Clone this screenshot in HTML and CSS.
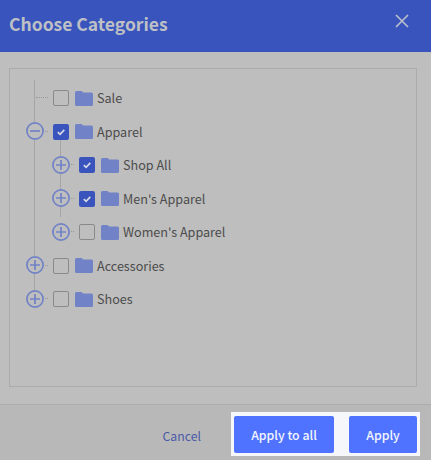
FILE: index.html
```html
<!DOCTYPE html>
<html lang="en">
<head>
<meta charset="utf-8">
<title>Choose Categories</title>
<link rel="stylesheet" href="styles.css">
<svg class="defs" width="0" height="0">
  <symbol id="folder" viewBox="0 0 18 15"><path d="M1.5 0H6.600L8.200 1.600H16.500A1.500 1.500 0 0 1 18 3.100V13.500A1.500 1.500 0 0 1 16.500 15H1.500A1.500 1.500 0 0 1 0 13.500V1.500A1.500 1.500 0 0 1 1.500 0Z" fill="#7182c6"/></symbol>
  <symbol id="plus" viewBox="0 0 18 18"><circle cx="9" cy="9" r="8.100" fill="#bebebe" stroke="#7182c6" stroke-width="1.700"/><path d="M4 9H14M9 4V14" stroke="#7182c6" stroke-width="1.700"/></symbol>
  <symbol id="minus" viewBox="0 0 18 18"><circle cx="9" cy="9" r="8.100" fill="#bebebe" stroke="#7182c6" stroke-width="1.700"/><path d="M4 9H14" stroke="#7182c6" stroke-width="1.700"/></symbol>
  <symbol id="tick" viewBox="0 0 16 16"><path d="M4.800 8.200L7.100 10.400L11.300 5.900" fill="none" stroke="#d6d9e6" stroke-width="1.700"/></symbol>
</svg>
</head>
<body>
<div class="dialog">
  <header class="head">
    <h1>Choose Categories</h1>
    <svg class="close" width="14" height="14" viewBox="0 0 14 14"><path d="M1 1L13 13M13 1L1 13" stroke="#bcc0cc" stroke-width="1.600" fill="none"/></svg>
  </header>
  <main class="body">
    <div class="panel">
      <ul class="tree">
        <li class="row leaf">
          <span class="tog"></span><span class="cb"></span><svg class="fo"><use href="#folder"/></svg><span class="lb">Sale</span>
        </li>
        <li class="row">
          <svg class="tog"><use href="#minus"/></svg><span class="cb on"><svg><use href="#tick"/></svg></span><svg class="fo"><use href="#folder"/></svg><span class="lb">Apparel</span>
        </li>
        <li>
          <ul class="sub">
            <li class="row"><svg class="tog"><use href="#plus"/></svg><span class="cb on"><svg><use href="#tick"/></svg></span><svg class="fo"><use href="#folder"/></svg><span class="lb">Shop All</span></li>
            <li class="row"><svg class="tog"><use href="#plus"/></svg><span class="cb on"><svg><use href="#tick"/></svg></span><svg class="fo"><use href="#folder"/></svg><span class="lb">Men's Apparel</span></li>
            <li class="row"><svg class="tog"><use href="#plus"/></svg><span class="cb"></span><svg class="fo"><use href="#folder"/></svg><span class="lb">Women's Apparel</span></li>
          </ul>
        </li>
        <li class="row"><svg class="tog"><use href="#plus"/></svg><span class="cb"></span><svg class="fo"><use href="#folder"/></svg><span class="lb">Accessories</span></li>
        <li class="row"><svg class="tog"><use href="#plus"/></svg><span class="cb"></span><svg class="fo"><use href="#folder"/></svg><span class="lb">Shoes</span></li>
      </ul>
    </div>
  </main>
  <footer class="foot">
    <a class="cancel">Cancel</a>
    <div class="hl">
      <button class="btn wide">Apply to all</button>
      <button class="btn narrow">Apply</button>
    </div>
  </footer>
</div>
</body>
</html>
```
FILE: styles.css
```css
* { box-sizing: border-box; }
html, body { margin: 0; padding: 0; }
body { width: 431px; height: 460px; overflow: hidden; background: #bebebe; font-family: "Noto Sans CJK KR", "Noto Sans", sans-serif; }
.defs { position: absolute; }
.dialog { display: flex; flex-direction: column; height: 460px; }
.head { flex: none; height: 52px; background: #3955bd; display: flex; align-items: center; justify-content: space-between; padding: 0 22px 4px 9px; }
.head h1 { margin: 0 0 1px; font-size: 17.500px; font-weight: 700; color: #bec0c6; line-height: 24px; }
.close { display: block; margin-bottom: 6px; }
.body { flex: none; height: 352px; padding: 16px 14px 17px 9px; }
.panel { height: 319px; border: 1.500px solid #ababab; padding-top: 12px; }
.tree, .sub { list-style: none; margin: 0; padding: 0; position: relative; }
.tree::before { content: ""; position: absolute; left: 24px; top: -1px; height: 211px; width: 1px; background: #a5a5a5; }
.sub { padding-left: 26px; }
.sub::before { content: ""; position: absolute; left: 50px; top: -8px; height: 77px; width: 1px; background: #a5a5a5; }
.row { position: relative; height: 33.500px; display: flex; align-items: center; padding-left: 16px; }
.row::before { content: ""; position: absolute; left: 35px; top: 16px; width: 3px; border-top: 1px dotted #989898; }
.leaf::before { left: 26px; width: 12px; }
.tog { width: 18px; height: 18px; flex: none; position: relative; z-index: 1; overflow: visible; margin-right: 9px; display: block; }
.cb { width: 16px; height: 16px; flex: none; border: 1.500px solid #8a8a8a; border-radius: 2px; margin-right: 6px; position: relative; top: 0.500px; }
.cb svg { display: block; width: 16px; height: 16px; margin: 0; }
.cb.on { background: #3955bd; border: 0; }
.fo { width: 18px; height: 15px; flex: none; margin-right: 4px; display: block; position: relative; top: 0.500px; }
.lb { font-size: 12.600px; color: #4c4c4c; line-height: 18px; white-space: nowrap; position: relative; top: 0.500px; }
.foot { flex: 1; background: #b8b8b8; border-top: 1.500px solid #adadad; display: flex; align-items: flex-start; justify-content: flex-end; padding: 7px 11px 0 0; }
.cancel { font-size: 12.300px; color: #4a5aa8; margin: 15px 30px 0 0; line-height: 18px; }
.hl { display: flex; gap: 15px; background: #f6f7fa; padding: 4px 3px; height: 44px; }
.btn { height: 37px; border: 0; border-radius: 2px; background: #5073ff; color: #f4f6ff; font: 500 12.300px "Noto Sans CJK KR", "Noto Sans", sans-serif; padding: 0; }
.wide { width: 100px; }
.narrow { width: 68px; }
```
